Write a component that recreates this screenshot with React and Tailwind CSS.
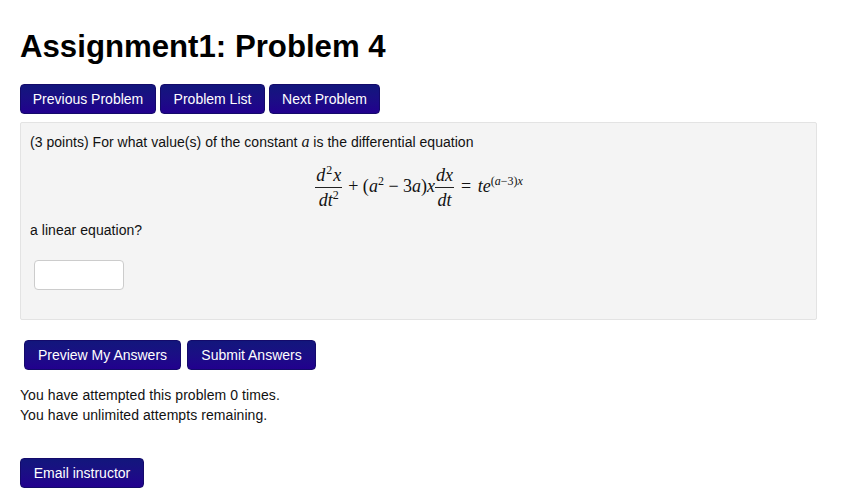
const btn =
  "h-[30px] rounded-[4px] border border-[#140a6b] bg-gradient-to-b from-[#12167c] to-[#22008e] text-[14px] leading-none text-white";

function Fraction({ top, bottom }) {
  return (
    <span className="inline-flex flex-col items-center">
      <span className="border-b border-[#222] px-[1px] leading-[24px]">{top}</span>
      <span className="px-[1px] pt-[2px] leading-[20px]">{bottom}</span>
    </span>
  );
}

function Sup({ children }) {
  return <sup className="relative -top-[7px] text-[12px] leading-none align-baseline">{children}</sup>;
}

function Equation() {
  return (
    <div className="flex h-[44px] items-center justify-center pr-[8px] font-['Liberation_Serif',serif] text-[18px] text-[#111]">
      <Fraction
        top={<><i>d</i><span className="ml-[1px]"><Sup>2</Sup></span><i className="ml-[1px]">x</i></>}
        bottom={<><i>dt</i><Sup>2</Sup></>}
      />
      <span className="ml-[6px] whitespace-pre">+ (<i>a</i><Sup>2</Sup> − 3<i>a</i>)<i>x</i></span>
      <Fraction top={<i>dx</i>} bottom={<i>dt</i>} />
      <span className="ml-[7px] whitespace-pre">= <i className="ml-[2px]">te</i><Sup>(<i>a</i>−3)<i>x</i></Sup></span>
    </div>
  );
}

export default function App() {
  return (
    <div className="h-[500px] w-[865px] overflow-hidden bg-white pl-[20px] pr-[48px] font-['Liberation_Sans',sans-serif] text-[14px] text-[#111]">
      <h1 className="pt-[28px] text-[31.2px] font-bold leading-[38px] text-black">Assignment1: Problem 4</h1>

      <div className="mt-[18px] flex gap-[4px]">
        <button type="button" className={`${btn} w-[136px]`}>Previous Problem</button>
        <button type="button" className={`${btn} w-[105px]`}>Problem List</button>
        <button type="button" className={`${btn} w-[111px]`}>Next Problem</button>
      </div>

      <div className="mt-[8px] h-[198px] rounded-[2px] border border-[#e3e3e3] bg-[#f4f4f4] pl-[9px] pt-[9px]">
        <p className="leading-[20px] tracking-[0.03px]">
          (3 points) For what value(s) of the constant <i className="font-['Liberation_Serif',serif] text-[16px]">a</i> is the differential equation
        </p>
        <div className="mt-[12px]">
          <Equation />
        </div>
        <p className="mt-[12px] leading-[20px] tracking-[0.05px]">a linear equation?</p>
        <input
          type="text"
          aria-label="answer"
          className="ml-[4px] mt-[20px] block h-[30px] w-[90px] rounded-[4px] border border-[#ccc] bg-white"
        />
      </div>

      <div className="ml-[4px] mt-[20px] flex gap-[6px]">
        <button type="button" className={`${btn} w-[157px]`}>Preview My Answers</button>
        <button type="button" className={`${btn} w-[129px]`}>Submit Answers</button>
      </div>

      <p className="mt-[15px] leading-[20px] tracking-[0.07px]">
        You have attempted this problem 0 times.
        <br />
        You have unlimited attempts remaining.
      </p>

      <button type="button" className={`${btn} mt-[33px] block w-[124px]`}>Email instructor</button>
    </div>
  );
}
